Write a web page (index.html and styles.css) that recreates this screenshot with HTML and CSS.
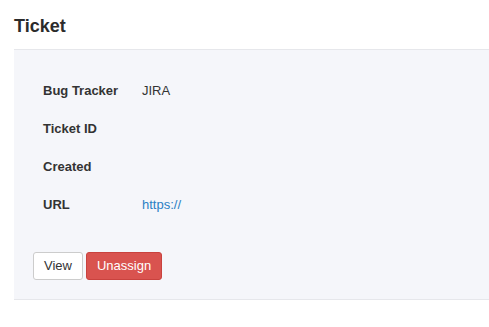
FILE: index.html
```html
<!DOCTYPE html>
<html>
<head>
<meta charset="utf-8">
<link rel="stylesheet" href="styles.css">
</head>
<body>
<div class="page">
  <h2 class="title">Ticket</h2>
  <div class="panel">
    <div class="details">
      <div class="row"><span class="label">Bug Tracker</span><span class="value">JIRA</span></div>
      <div class="row"><span class="label">Ticket ID</span><span class="value"></span></div>
      <div class="row"><span class="label">Created</span><span class="value"></span></div>
      <div class="row"><span class="label">URL</span><span class="value"><a class="link" href="#">https://</a></span></div>
    </div>
    <div class="actions">
      <button class="btn btn-default">View</button>
      <button class="btn btn-danger">Unassign</button>
    </div>
  </div>
</div>
</body>
</html>
```
FILE: styles.css
```css
html, body {
  margin: 0;
  padding: 0;
  background: #fff;
}
body {
  font-family: "Liberation Sans", Arial, sans-serif;
  color: #333;
  font-size: 13px;
}
.page {
  padding-left: 14px;
}
.title {
  margin: 0;
  font-size: 18px;
  line-height: 22px;
  font-weight: bold;
  color: #2b2b2b;
  padding: 15px 0 12px;
}
.panel {
  background: #f5f6fa;
  border-top: 1px solid #e6e7eb;
  border-bottom: 1px solid #e6e7eb;
  padding: 22px 0 19px 19px;
}
.details {
  padding-left: 10px;
}
.row {
  display: flex;
  padding: 10px 0;
  line-height: 18px;
}
.label {
  width: 99px;
  font-weight: bold;
}
.link {
  color: #2a80c4;
  text-decoration: none;
}
.actions {
  display: flex;
  gap: 3px;
  margin-top: 28px;
}
.btn {
  font-family: "Liberation Sans", Arial, sans-serif;
  font-size: 13px;
  height: 28px;
  padding: 0 10px;
  border-radius: 3px;
  border: 1px solid #ccc;
  line-height: 26px;
  cursor: pointer;
}
.btn-default {
  background: #fff;
  color: #333;
}
.btn-danger {
  background: #d9534f;
  border-color: #c9423e;
  color: #fff;
}
```
